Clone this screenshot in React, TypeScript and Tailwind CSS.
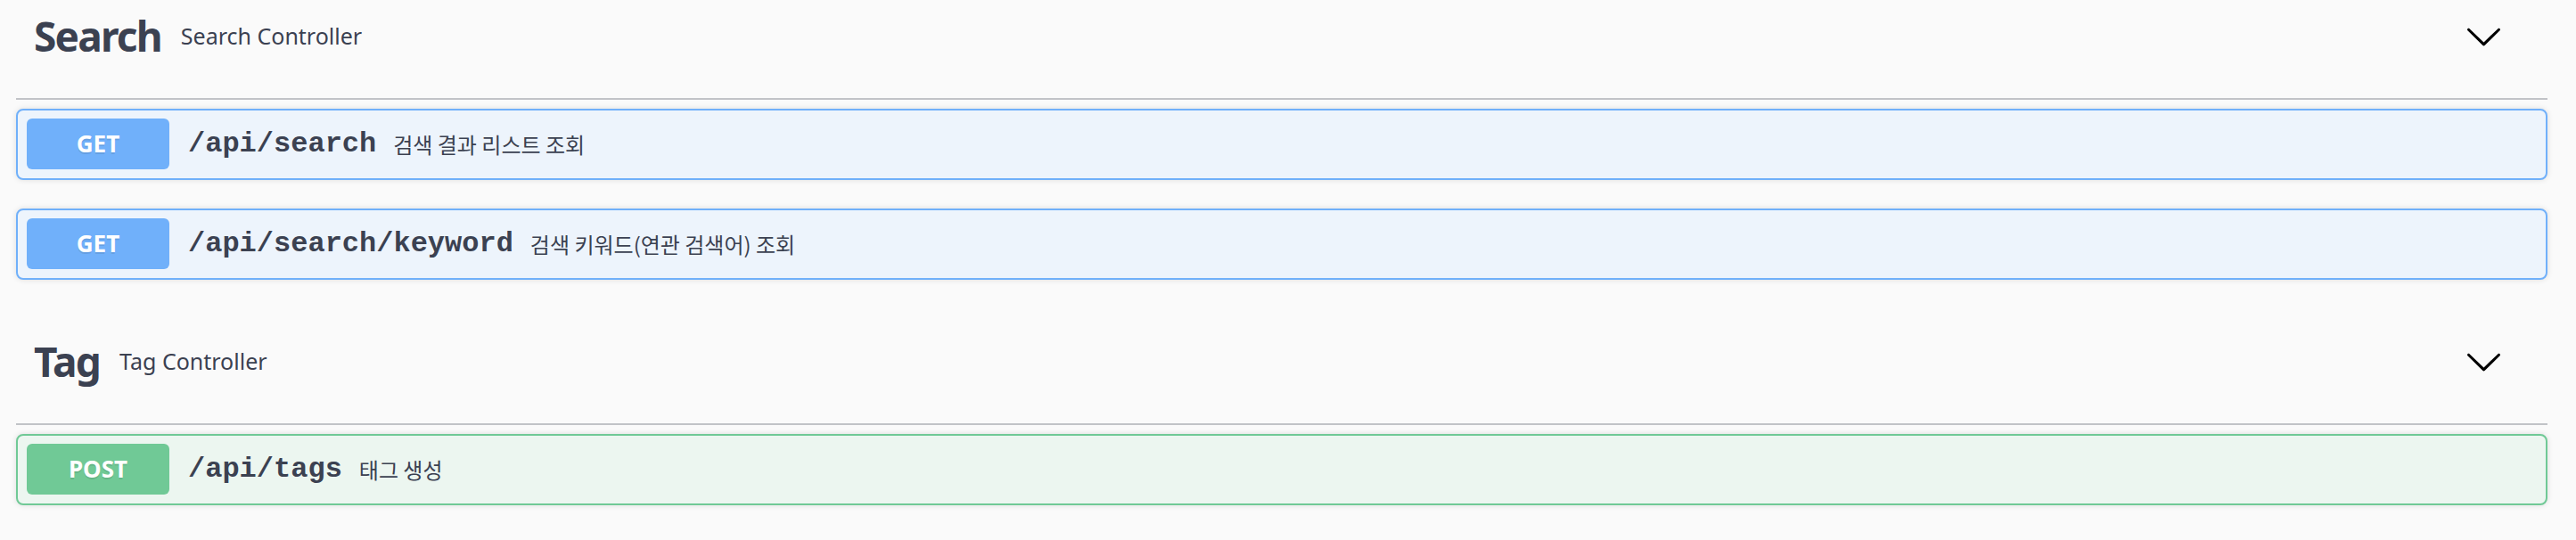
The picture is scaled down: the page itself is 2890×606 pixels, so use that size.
import React from 'react'

type Method = 'GET' | 'POST'

type Op = { method: Method; path: string; summary: string }

type Tag = { name: string; description: string; ops: Op[] }

const tags: Tag[] = [
  {
    name: 'Search',
    description: 'Search Controller',
    ops: [
      { method: 'GET', path: '/api/search', summary: '검색 결과 리스트 조회' },
      { method: 'GET', path: '/api/search/keyword', summary: '검색 키워드(연관 검색어) 조회' },
    ],
  },
  {
    name: 'Tag',
    description: 'Tag Controller',
    ops: [{ method: 'POST', path: '/api/tags', summary: '태그 생성' }],
  },
]

const methodStyles: Record<Method, { block: string; badge: string }> = {
  GET: {
    block: 'border-[#70b0fa] bg-[#edf4fc]',
    badge: 'bg-[#70b0fa]',
  },
  POST: {
    block: 'border-[#70c996] bg-[#ecf6f0]',
    badge: 'bg-[#70c996]',
  },
}

function Chevron() {
  return (
    <svg width="43" height="43" viewBox="0 0 20 20" aria-hidden="true">
      <path
        fill="#000"
        d="M17.418 6.109c.272-.268.709-.268.979 0s.271.701 0 .969l-7.908 7.83c-.27.268-.707.268-.979 0l-7.908-7.83c-.27-.268-.27-.701 0-.969.271-.268.709-.268.979 0L10 13.25l7.418-7.141z"
      />
    </svg>
  )
}

function OpBlock({ op }: { op: Op }) {
  const s = methodStyles[op.method]
  return (
    <div
      className={`flex items-center border-2 rounded-[8px] pl-[10px] pr-[10px] pt-[9px] pb-[10px] shadow-[0_0_6px_rgba(0,0,0,0.12)] ${s.block}`}
    >
      <span
        className={`flex items-center justify-center w-[160px] h-[57px] rounded-[6px] text-white text-[26px] font-bold font-['Noto_Sans',sans-serif] [text-shadow:0_2px_0_rgba(0,0,0,0.1)] ${s.badge}`}
      >
        {op.method}
      </span>
      <span className="ml-[21px] text-[32px] font-bold text-[#3b4151] font-['Liberation_Mono',monospace]">
        {op.path}
      </span>
      <span className="ml-[19px] text-[24px] text-[#3b4151] font-['Noto_Sans_CJK_KR','Noto_Sans',sans-serif]">
        {op.summary}
      </span>
    </div>
  )
}

function TagSection({ tag }: { tag: Tag }) {
  return (
    <section>
      <div className="border-b-2 border-[#c1c3c7] pb-[30px] mb-[10px]">
        <div className="flex items-center h-[80px] pl-[20px] pr-[50px] text-[#3b4151]">
          <h3 className="text-[46px] font-bold tracking-[-1.8px] font-['Noto_Sans',sans-serif] leading-none">
            {tag.name}
          </h3>
          <small className="ml-[22px] text-[25px] font-['Noto_Sans',sans-serif] leading-none">
            {tag.description}
          </small>
          <div className="flex-1" />
          <Chevron />
        </div>
      </div>
      <div className="flex flex-col gap-[32px]">
        {tag.ops.map((op) => (
          <OpBlock key={op.method + op.path} op={op} />
        ))}
      </div>
    </section>
  )
}

export default function App() {
  return (
    <div className="min-h-[606px] bg-[#fafafa] pl-[18px] pr-[32px] flex flex-col gap-[51px]">
      {tags.map((t) => (
        <TagSection key={t.name} tag={t} />
      ))}
    </div>
  )
}
